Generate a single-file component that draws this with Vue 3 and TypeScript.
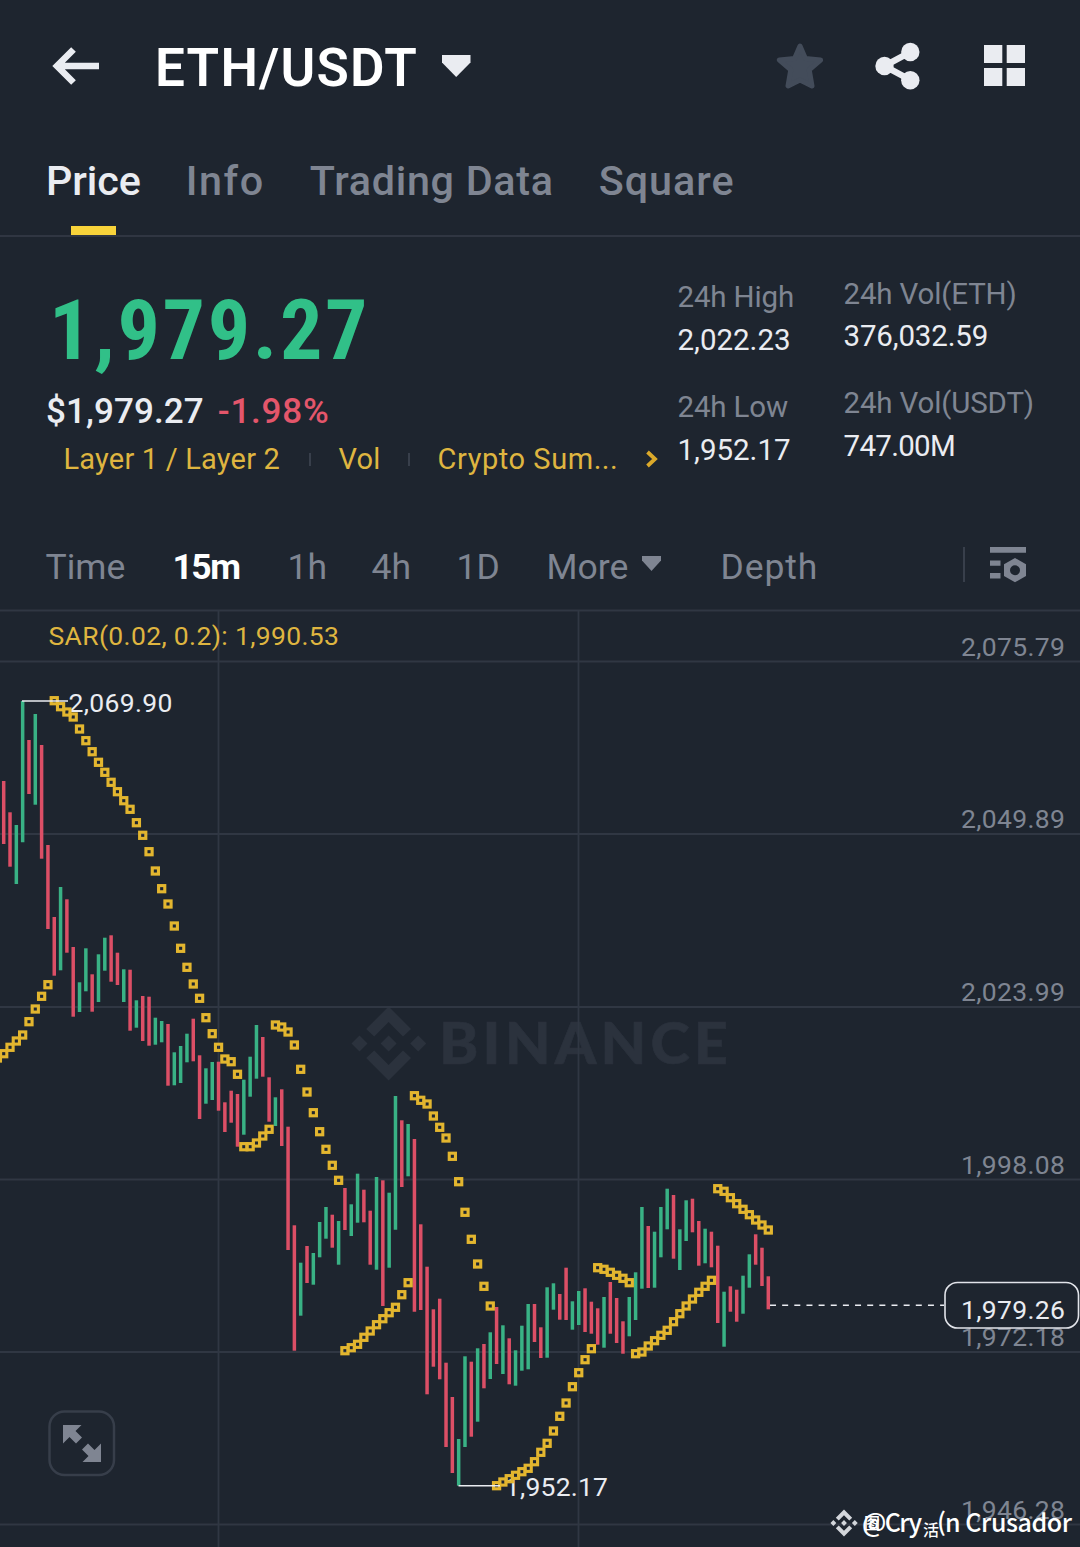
<script setup lang="ts">
interface Candle {
  x: number
  top: number
  bottom: number
  up: boolean
}

const STEP = 6.319
const FIRST_X = 3.7
const xAt = (i: number): number => FIRST_X + i * STEP

const tabs = [
  { label: 'Price', spacing: -0.1, active: true },
  { label: 'Info', spacing: 1.6, active: false },
  { label: 'Trading Data', spacing: 0.7, active: false },
  { label: 'Square', spacing: 1, active: false },
]

const stats = [
  [
    { label: '24h High', value: '2,022.23' },
    { label: '24h Low', value: '1,952.17' },
  ],
  [
    { label: '24h Vol(ETH)', value: '376,032.59' },
    { label: '24h Vol(USDT)', value: '747.00M' },
  ],
]

// direction, high and low position of every bar
const bars = `r781,844 r812.3,866.7 g825,884 g701,842.3 r740,794 g714,804.7 r745,858.7 r845,929 r917,975.7 g887,970.3
r899.3,952.7 r947,1016.7 g982.3,1012 g948.3,991.3 r974.3,1011.7 g954.3,1002 g937.7,970.7 r935.3,981.7 r952.7,985 g969.3,1002
r969.7,1030.7 g1000.3,1027.7 r996,1041 r996.7,1045.7 g1017.7,1044.7 g1021,1042.3 r1024,1085.7 g1052.3,1085.3 g1046,1083 g1033.7,1062.3
r1018.7,1061.3 r1055.3,1119 g1068.3,1103.7 g1062,1100 r1061.7,1110.7 r1102.3,1132 r1090.7,1122.7 r1094,1146.7 g1079.7,1134.7 g1056.7,1096.7
g1025,1078.7 r1037,1076.7 r1077.3,1121.7 g1097.3,1126 r1089.3,1146 r1126.7,1250 r1225.3,1350.7 g1262.7,1315.7 r1246,1283 g1253,1284.7
g1222,1257.3 g1207,1238.7 r1214.7,1247.7 g1221,1264.7 r1188,1230 g1204.3,1236 g1173.7,1222.7 r1189.7,1222.3 r1210.7,1264.7 g1177,1269.7
r1180.3,1306 g1192.7,1267.7 g1096,1229.7 r1120.3,1187 g1124,1176.3 r1139,1311.7 r1224.3,1310 r1266.7,1394.3 r1309.3,1366.7 r1298.7,1379.3
r1362.7,1447 r1397,1473 g1439,1485.7 g1356.3,1447 r1361.7,1436.7 g1348.3,1421.7 r1344,1388.3 g1332.3,1379 r1307,1364 g1325.3,1374
r1338.3,1384.3 g1350.3,1385.7 g1325.7,1370.7 g1304,1369.3 r1304,1342 r1327.3,1358 g1287.3,1357.7 g1283.3,1309.7 r1294,1319.7 r1267.7,1320
g1301.3,1329.7 g1291,1325 r1288.3,1332 r1301.7,1333.7 r1308.3,1344.7 g1297,1347.7 r1282,1333.7 r1298,1343 r1321.3,1353.7 g1297,1336.3
g1272.3,1320 g1207,1288.7 r1226,1288 g1231.7,1287.7 g1207,1257.3 g1188.7,1229.3 r1195,1258.7 g1229.3,1270 g1200.3,1241 r1198.7,1232.3
r1221,1265.7 g1228.7,1263.3 r1231.7,1267.3 r1245.7,1323 g1291.7,1346.7 r1286.3,1311.7 r1289.7,1321.7 g1275.7,1313.7 g1254.3,1287.7 r1234.3,1264.7
r1247.7,1286 r1276.3,1309.3`

const candles: Candle[] = bars.split(/\s+/).map((bar, i) => {
  const [top, bottom] = bar.slice(1).split(',').map(Number)
  return { x: xAt(i), top, bottom, up: bar[0] === 'g' }
})

// one parabolic SAR value per bar, beginning one bar left of the viewport
const sar = [
  1058, 1053.7, 1047.3, 1041, 1035, 1021.7, 1009, 996.3, 984.7,
  700.7, 706.7, 712, 717, 729, 740.7, 751.7, 762.3, 772.3, 782.3, 791.7, 800.7, 809.3, 822.7, 835.3, 851.7, 871, 888.7,
  904, 926, 948.3, 967.3, 984, 998.3, 1017.7, 1033.7, 1047.3, 1059, 1061.7, 1074.3,
  1146.7, 1146.7, 1143, 1136, 1129.3,
  1025, 1027, 1032, 1045, 1069.3, 1092, 1112.7, 1131.7, 1149.3, 1165.3, 1180.3,
  1350.7, 1347.7, 1344.3, 1337.3, 1331, 1324.7, 1318.7, 1312.7, 1307.3, 1294.7, 1282.7,
  1095.7, 1100.3, 1104, 1116, 1127.3, 1138, 1156.3, 1181.7, 1212.3, 1239.3, 1264, 1286.3, 1306,
  1485.7, 1482, 1478.7, 1475.3, 1471.7, 1468.3, 1461.7, 1452.3, 1443.3, 1431, 1416.3, 1403, 1386.7, 1372.7, 1359.7, 1348.7,
  1267.7, 1269.3, 1272.3, 1275.3, 1278.3, 1282.7,
  1353.7, 1352, 1346, 1340.7, 1335.3, 1330.3, 1321.7, 1313.7, 1306, 1299, 1292.3, 1286.3, 1280.3,
  1188.7, 1191.3, 1197.7, 1203.7, 1209.3, 1214.7, 1220, 1225, 1230,
].map((y, i) => ({ x: xAt(i - 1), y }))

const levels = [
  { y: 661.5, label: '2,075.79' },
  { y: 834, label: '2,049.89' },
  { y: 1007, label: '2,023.99' },
  { y: 1179.5, label: '1,998.08' },
  { y: 1352, label: '1,972.18' },
  { y: 1524.5, label: '1,946.28' },
]
</script>

<template>
  <main class="screen">
    <header class="header">
      <svg class="back" width="48" height="40" viewBox="0 0 48 40">
        <path d="M5 20H47M21.500 3.500 5 20l16.500 16.500" fill="none" stroke="#eaecf1" stroke-width="6.600" />
      </svg>
      <h1 class="pair">ETH/USDT</h1>
      <svg class="caret" width="29" height="22" viewBox="0 0 29 22">
        <path d="M0 0H28.500V7.500L14.200 22 0 7.500Z" fill="#eaecf1" />
      </svg>
      <svg class="star" width="48" height="48" viewBox="0 0 48 48">
        <path d="M24 4l5.400 12.600 15.200 1.400-11.400 9.800 2.800 16.200L24 38 12 44l2.800-16.200L3.400 18l15.200-1.400z" fill="#434c5a" stroke="#434c5a" stroke-width="5" stroke-linejoin="round" />
      </svg>
      <svg class="share" width="46" height="48" viewBox="0 0 46 48">
        <path d="M35.500 10 9.500 24l26 14" fill="none" stroke="#eaecf1" stroke-width="6.500" />
        <circle cx="9.500" cy="24" r="9.200" fill="#eaecf1" />
        <circle cx="35.300" cy="10" r="9.200" fill="#eaecf1" />
        <circle cx="35.300" cy="38.300" r="9.200" fill="#eaecf1" />
      </svg>
      <svg class="apps" width="41" height="41" viewBox="0 0 41 41">
        <path d="M0 0h18.300v18H0zM22.700 0H41v18H22.700zM0 23h18.300v18H0zM22.700 23H41v18H22.700z" fill="#eaecf1" />
      </svg>
    </header>

    <nav class="tabs">
      <span v-for="tab in tabs" :key="tab.label" class="tab" :class="{ active: tab.active }" :style="{ letterSpacing: tab.spacing + 'px' }">{{ tab.label }}</span>
    </nav>

    <section class="summary">
      <div class="quote">
        <div class="last">1,979.27</div>
        <div class="change">
          <span class="fiat">$1,979.27</span>
          <span class="percent">-1.98%</span>
        </div>
        <div class="tags">
          <span class="tag first">Layer 1 / Layer 2</span>
          <i class="divider"></i>
          <span class="tag">Vol</span>
          <i class="divider"></i>
          <span class="tag wide">Crypto Sum...</span>
          <svg class="chevron" width="12" height="18" viewBox="0 0 12 18">
            <path d="M1.500 2 9 9l-7.500 7" fill="none" stroke="#dba92a" stroke-width="3.800" />
          </svg>
        </div>
      </div>
      <div v-for="(column, c) in stats" :key="c" class="stats" :class="'col' + c">
        <div v-for="stat in column" :key="stat.label" class="stat">
          <div class="label">{{ stat.label }}</div>
          <div class="value">{{ stat.value }}</div>
        </div>
      </div>
    </section>

    <nav class="periods">
      <span>Time</span>
      <span class="active">15m</span>
      <span>1h</span>
      <span>4h</span>
      <span>1D</span>
      <span class="more">More
        <svg width="19" height="15" viewBox="0 0 19 15"><path d="M0 0H19V4.500L9.500 15 0 4.500Z" fill="#7f8592" /></svg>
      </span>
      <span class="depth">Depth</span>
      <i class="bar"></i>
      <svg class="settings" width="37" height="36" viewBox="0 0 37 36">
        <path d="M0 0H36V5.700H0zM0 13.500H10.500V18.800H0zM0 26H10.500V31.500H0z" fill="#7f8592" />
        <path fill-rule="evenodd" d="M25 11 36 17.300V29L25 35.300 14 29V17.300zM25 18.300a5 5 0 1 0 0 10 5 5 0 0 0 0-10z" fill="#7f8592" />
      </svg>
    </nav>

    <svg class="chart" width="1080" height="938" viewBox="0 609 1080 938">
      <g class="brand">
        <g id="mark">
          <path d="M388.600 1006.500 411 1029l-8 7.500-14.400-14.500-14.400 14.500-8-7.500z" />
          <path d="M388.600 1080.500 411 1058l-8-7.500-14.400 14.500-14.400-14.500-8 7.500z" />
          <path d="M388.600 1035.500l8 8-8 8-8-8zM359.500 1035.500l8 8-8 8-8-8zM418.200 1035.500l8 8-8 8-8-8z" />
        </g>
        <text x="439" y="1063.500" textLength="293" lengthAdjust="spacingAndGlyphs">BINANCE</text>
      </g>

      <g class="grid">
        <path d="M0 610.500H1080" stroke-width="2.500" />
        <path v-for="level in levels" :key="level.y" :d="`M0 ${level.y}H1080`" />
        <path d="M218.500 610V1547M578.500 610V1547" />
      </g>

      <text v-for="level in levels" :key="level.label" class="axis" x="961" :y="level.y - 6" textLength="104">{{ level.label }}</text>
      <text class="indicator" x="48.500" y="644.500" textLength="290.500">SAR(0.02, 0.2): 1,990.53</text>

      <path v-for="(c, i) in candles" :key="i" :d="`M${c.x} ${c.top}V${c.bottom}`" :class="c.up ? 'up' : 'down'" />

      <text class="extreme" x="68.500" y="711.500" textLength="104">2,069.90</text>
      <text class="extreme" x="505" y="1495.500" textLength="103">1,952.17</text>
      <rect v-for="(p, i) in sar" :key="'s' + i" class="sar" :x="p.x - 3.100" :y="p.y - 3.100" width="6.200" height="6.200" />
      <path d="M22 701H68M458.500 1485.700H500" class="leader" />

      <path d="M770 1305.200H944" class="current" />
      <rect x="945" y="1282.500" width="133.500" height="45.500" rx="12.500" class="badge" />
      <text class="extreme" x="961" y="1318.500" textLength="104">1,979.26</text>

      <rect x="49.500" y="1411.500" width="64.500" height="63.500" rx="15" class="expand" />
      <path d="M63 1425h18.500l-6 6 6.500 6.500-6 6-6.500-6.500-6.500 6.500zM101 1462H82.500l6-6-6.500-6.500 6-6 6.500 6.500 6.500-6.500z" fill="#7f8592" />

      <g class="credit">
        <g transform="translate(844 1523) scale(.365) translate(-388.600 -1043.500)">
          <use href="#mark" />
        </g>
        <text x="862" y="1532" textLength="60">@Cry</text>
        <text x="864" y="1529" class="small">图</text>
        <text x="923" y="1536" class="small">活</text>
        <text x="937" y="1531">(</text>
        <text x="945" y="1532" textLength="127">n Crusador</text>
      </g>
    </svg>
  </main>
</template>

<style>
body {
  background: #1e252f;
}
</style>

<style scoped>
.screen {
  width: 1080px;
  height: 1547px;
  overflow: hidden;
  background: #1e252f;
  font-family: Roboto, "Liberation Sans", sans-serif;
  color: #eaecf1;
}

svg {
  display: block;
  flex: none;
}

.header {
  display: flex;
  align-items: center;
  height: 131px;
  padding-left: 52px;
}

.pair {
  margin: 5px 0 0 55px;
  width: 272px;
  font-size: 53px;
  font-weight: 600;
  letter-spacing: 1.200px;
  color: #fff;
}

.caret {
  margin-left: 15px;
}

.star {
  margin-left: 305px;
}

.share {
  margin-left: 51px;
}

.apps {
  margin-left: 63px;
}

.tabs {
  display: flex;
  gap: 45px;
  height: 79px;
  padding: 25px 0 0 46px;
  border-bottom: 2px solid #303642;
  font-size: 41.300px;
  font-weight: 500;
  line-height: 50px;
  color: #7f8592;
}

.tab.active {
  display: flex;
  flex-direction: column;
  align-items: center;
  justify-content: space-between;
  color: #eaecf1;
}

.tab.active::after {
  content: "";
  width: 45px;
  height: 9px;
  background: #f8d33a;
}

.summary {
  display: flex;
  height: 293px;
}

.quote {
  flex: none;
  width: 631.500px;
  padding: 49px 0 0 46px;
}

.last {
  padding-left: 3px;
  font-size: 84px;
  font-weight: 700;
  font-stretch: 75%;
  line-height: 90px;
  letter-spacing: 2.700px;
  color: #31c088;
}

.change {
  display: flex;
  gap: 14px;
  margin-top: 14px;
  font-size: 35px;
  font-weight: 500;
  line-height: 44px;
}

.fiat {
  letter-spacing: 0.100px;
}

.percent {
  letter-spacing: 0.800px;
  color: #e4566b;
}

.tags {
  display: flex;
  align-items: center;
  margin-top: 8px;
  padding-left: 17.500px;
  font-size: 29px;
  line-height: 34px;
  letter-spacing: 0.200px;
  color: #dfb540;
}

.first {
  margin-right: 1.500px;
}

.divider {
  width: 2px;
  height: 13px;
  margin: 0 28px 0 27px;
  background: #383f4b;
}

.wide {
  letter-spacing: 0.550px;
}

.chevron {
  margin-left: 28px;
}

.stats {
  flex: none;
  font-size: 29.500px;
  line-height: 36px;
}

.col0 {
  width: 166px;
  padding-top: 42px;
}

.col1 {
  padding-top: 38.500px;
}

.stat {
  height: 110px;
}

.col1 .stat {
  height: 109.500px;
}

.label {
  letter-spacing: -0.150px;
  color: #7f8592;
}

.value {
  margin-top: 7px;
}

.col1 .value {
  margin-top: 6px;
  letter-spacing: -0.150px;
}

.col1 .stat:last-child .value {
  margin-top: 7px;
  letter-spacing: -0.700px;
}

.periods {
  display: grid;
  grid-template-columns: 127px 115px 84px 85px 90px 174px 242.500px 27px 37px;
  align-items: center;
  height: 74px;
  margin-bottom: 5px;
  padding-left: 45.500px;
  font-size: 35.500px;
  line-height: 42px;
  letter-spacing: 0;
  color: #7f8592;
}

.periods .active {
  font-weight: 700;
  letter-spacing: -1.500px;
  color: #fff;
}

.more {
  display: flex;
  align-items: center;
  gap: 13.500px;
}

.more svg {
  margin-top: -7px;
}

.depth {
  letter-spacing: 0.900px;
}

.bar {
  width: 2px;
  height: 35px;
  margin-top: -5px;
  background: #383f4b;
}

.settings {
  margin-top: -4px;
}

.brand {
  fill: #2b323d;
}

.brand text {
  font: 900 57px Lato, sans-serif;
  letter-spacing: 4px;
  stroke: #2b323d;
  stroke-width: 0.600;
}

.grid path {
  stroke: #303743;
  stroke-width: 1.800;
}

.axis,
.extreme,
.indicator {
  font-size: 26.500px;
}

.axis {
  fill: #7f8592;
}

.extreme {
  fill: #eaecf1;
}

.indicator {
  fill: #dfb540;
}

.up,
.down {
  stroke-width: 3.500;
}

.up {
  stroke: #39b285;
}

.down {
  stroke: #dc4f66;
}

.sar {
  fill: none;
  stroke: #e3b62f;
  stroke-width: 3.100;
}

.leader {
  stroke: #eaecf1;
  stroke-width: 1.500;
}

.current {
  stroke: #eaecf1;
  stroke-width: 1.500;
  stroke-dasharray: 6 6.150;
}

.badge {
  fill: #1e252f;
  stroke: #e2e4ea;
  stroke-width: 1.600;
}

.expand {
  fill: none;
  stroke: #373e4a;
  stroke-width: 2.500;
}

.credit {
  fill: #d3d6db;
}

.credit text {
  font: 500 25px "Noto Sans CJK SC", sans-serif;
  fill: #fff;
}

.credit .small {
  font-size: 16px;
}
</style>
